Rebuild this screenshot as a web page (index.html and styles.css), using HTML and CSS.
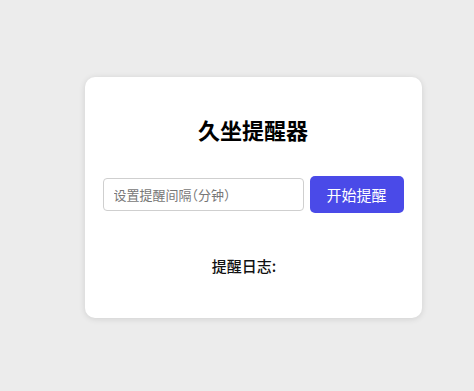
FILE: index.html
```html
<!DOCTYPE html>
<html lang="zh">
<head>
<meta charset="utf-8">
<title>久坐提醒器</title>
<link rel="stylesheet" href="styles.css">
</head>
<body>
<div class="card">
  <h1 class="title">久坐提醒器</h1>
  <div class="row">
    <input class="interval" type="number" placeholder="设置提醒间隔（分钟）">
    <button class="start">开始提醒</button>
  </div>
  <div class="log">提醒日志:</div>
</div>
</body>
</html>
```

FILE: styles.css
```css
html, body {
  margin: 0;
  height: 100%;
}
body {
  background: #ececec;
  font-family: "Noto Sans CJK SC", "Noto Sans", sans-serif;
  display: flex;
  align-items: center;
  justify-content: center;
  padding-left: 32px;
  padding-top: 4px;
  box-sizing: border-box;
}
.card {
  width: 337px;
  box-sizing: border-box;
  background: #fff;
  border-radius: 10px;
  box-shadow: 0 1px 6px rgba(0,0,0,0.12);
  padding: 36px 18px 40px;
  display: flex;
  flex-direction: column;
  align-items: stretch;
}
.title {
  margin: 0;
  font-size: 22px;
  line-height: 32px;
  font-weight: 700;
  text-align: center;
  color: #000;
}
.row {
  margin-top: 31px;
  display: flex;
  align-items: center;
  gap: 6px;
}
.interval {
  flex: 1;
  min-width: 0;
  height: 33px;
  box-sizing: border-box;
  border: 1px solid #cfcfcf;
  border-radius: 4px;
  padding: 0 10px;
  font-family: inherit;
  font-size: 13px;
  font-feature-settings: "halt";
  color: #333;
  outline: none;
}
.interval::placeholder {
  color: #777;
}
.start {
  width: 94px;
  height: 37px;
  border: none;
  border-radius: 5px;
  background: #4a4ae8;
  color: #fff;
  font-family: inherit;
  font-size: 15px;
  padding: 0;
}
.log {
  margin-top: 41px;
  padding-right: 18px;
  text-align: center;
  font-size: 15px;
  font-weight: 500;
  line-height: 24px;
  color: #111;
}
```
